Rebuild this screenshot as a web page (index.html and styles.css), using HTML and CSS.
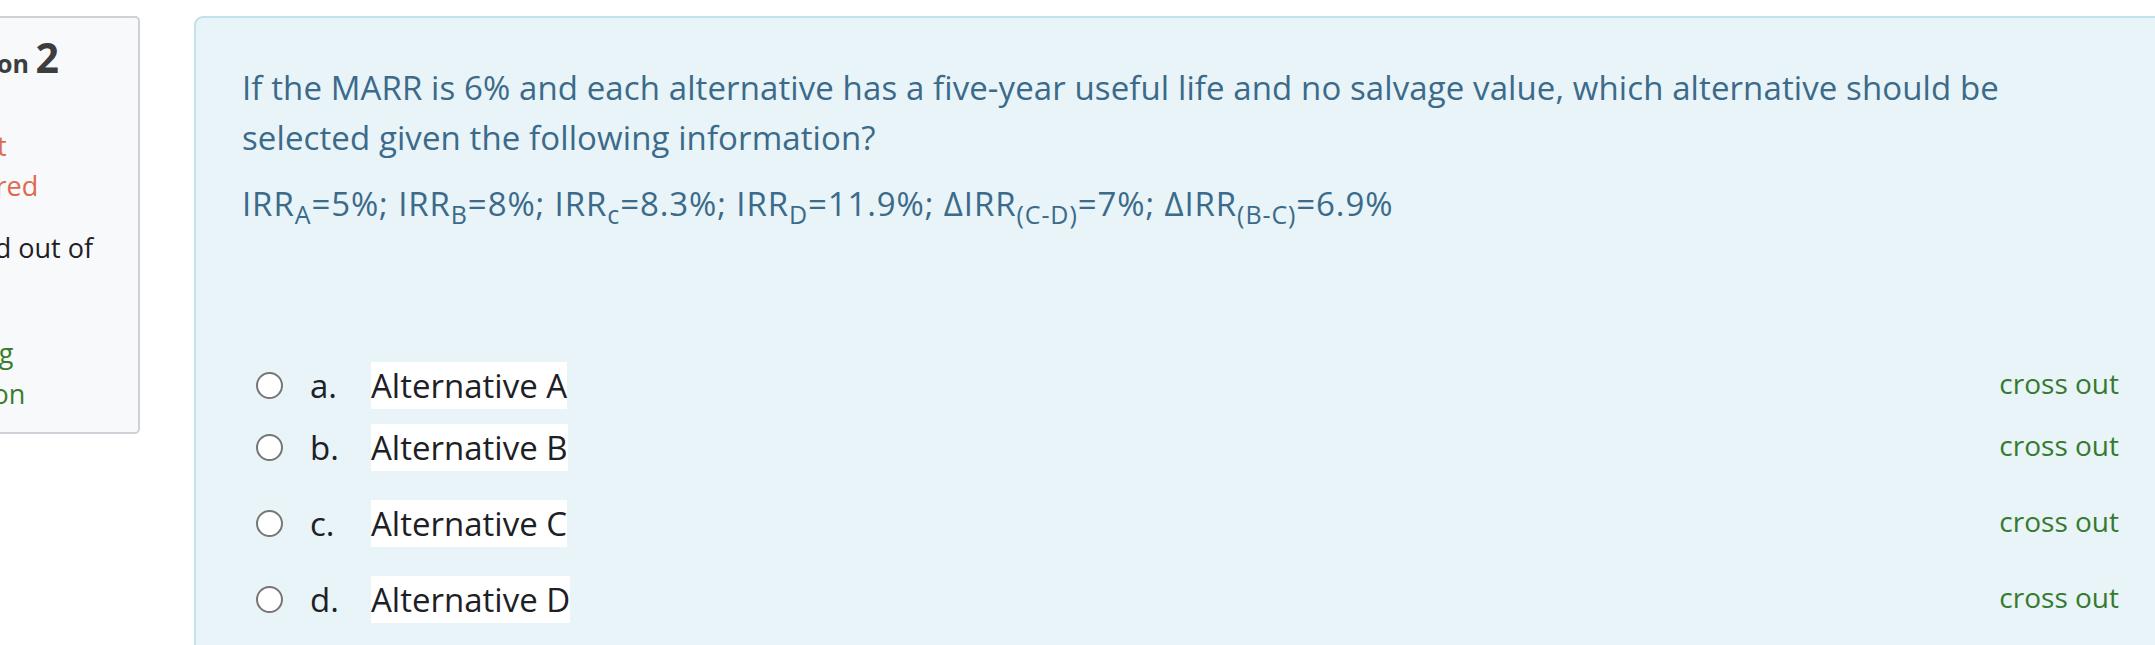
FILE: index.html
```html
<!DOCTYPE html>
<html lang="en">
<head>
<meta charset="utf-8">
<title>Question 2</title>
<link rel="stylesheet" href="styles.css">
</head>
<body>
<div class="page">
  <div class="info">
    <h3 class="no">Question <span class="qno">2</span></h3>
    <div class="state">Not yet answered</div>
    <div class="grade">Marked out of 1.00</div>
    <div class="flag"><svg class="flag-icon" viewBox="0 0 40 30" width="40" height="27"><path d="M8 2v26M8 3h22l-5 6 5 6H8" fill="none" stroke="#6a737b" stroke-width="2"/></svg>Flag question</div>
  </div>
  <div class="content">
    <div class="formulation">
      <p class="qtext">If the MARR is 6% and each alternative has a five-year useful life and no salvage value, which alternative should be selected given the following information?</p>
      <p class="qtext irr">IRR<sub>A</sub>=5%; IRR<sub>B</sub>=8%; IRR<sub>c</sub>=8.3%; IRR<sub>D</sub>=11.9%; ΔIRR<sub>(C-D)</sub>=7%; ΔIRR<sub>(B-C)</sub>=6.9%</p>
      <div class="answer">
        <div class="opt first"><span class="radio"></span><span class="num">a.</span><span class="label">Alternative A</span><a class="cross">cross out</a></div>
        <div class="opt"><span class="radio"></span><span class="num">b.</span><span class="label">Alternative B</span><a class="cross">cross out</a></div>
        <div class="opt"><span class="radio"></span><span class="num">c.</span><span class="label">Alternative C</span><a class="cross">cross out</a></div>
        <div class="opt"><span class="radio"></span><span class="num">d.</span><span class="label">Alternative D</span><a class="cross">cross out</a></div>
      </div>
    </div>
  </div>
</div>
</body>
</html>
```

FILE: styles.css
```css
html, body {
  margin: 0;
  padding: 0;
  background: #ffffff;
  overflow: hidden;
  font-family: "Open Sans", "Noto Sans", sans-serif;
}

.page {
  display: flex;
  align-items: flex-start;
  padding-top: 16px;
  width: 2400px;
}

.info {
  flex: 0 0 auto;
  box-sizing: border-box;
  width: 240px;
  margin-left: -100px;
  padding: 18px 13px 18px 13px;
  background: #f8f9fa;
  border: 2px solid #cdd2d8;
  border-radius: 5px;
  font-size: 27px;
  line-height: 40px;
  color: #1d2125;
}

.no {
  margin: 0 0 42px 0;
  font-size: 25px;
  line-height: 42px;
  font-weight: 700;
  color: #3d3d3d;
}

.qno {
  font-size: 41px;
}

.state {
  color: #dc6a4e;
  margin-bottom: 22px;
}

.grade {
  color: #1d2125;
  margin-bottom: 24px;
}

.flag {
  color: #3a7d2e;
  line-height: 41px;
}

.flag-icon {
  vertical-align: middle;
  margin-right: 8px;
}

.content {
  flex: 0 0 auto;
  margin-left: 54px;
  width: 1975px;
}

.formulation {
  box-sizing: border-box;
  min-height: 700px;
  background: #e8f4f7;
  border: 2px solid #c2e2ea;
  border-radius: 9px;
  padding: 45px 48px 20px 46px;
  color: #3b6a8b;
  font-size: 33px;
  line-height: 50px;
}

.qtext {
  margin: 0 0 16px 0;
  letter-spacing: 0.1px;
}

.qtext.irr {
  letter-spacing: 0.9px;
}

sub {
  font-size: 25px;
  line-height: 0;
  vertical-align: -8px;
}

.answer {
  margin-top: 133px;
  padding-left: 14px;
}

.opt {
  display: flex;
  align-items: center;
  height: 47px;
  margin-top: 29px;
  color: #1d2125;
}

.opt.first {
  margin-top: 0;
  margin-bottom: -14px;
}

.radio {
  flex: 0 0 auto;
  box-sizing: border-box;
  width: 27px;
  height: 27px;
  border: 2px solid #767676;
  border-radius: 50%;
  background: #ffffff;
  margin-right: 27px;
}

.num {
  flex: 0 0 auto;
  width: 61px;
}

.label {
  flex: 0 0 auto;
  background: #ffffff;
  line-height: 47px;
  height: 47px;
}

.cross {
  margin-left: auto;
  margin-bottom: 6px;
  font-size: 28px;
  line-height: 38px;
  color: #357a2f;
}
```
